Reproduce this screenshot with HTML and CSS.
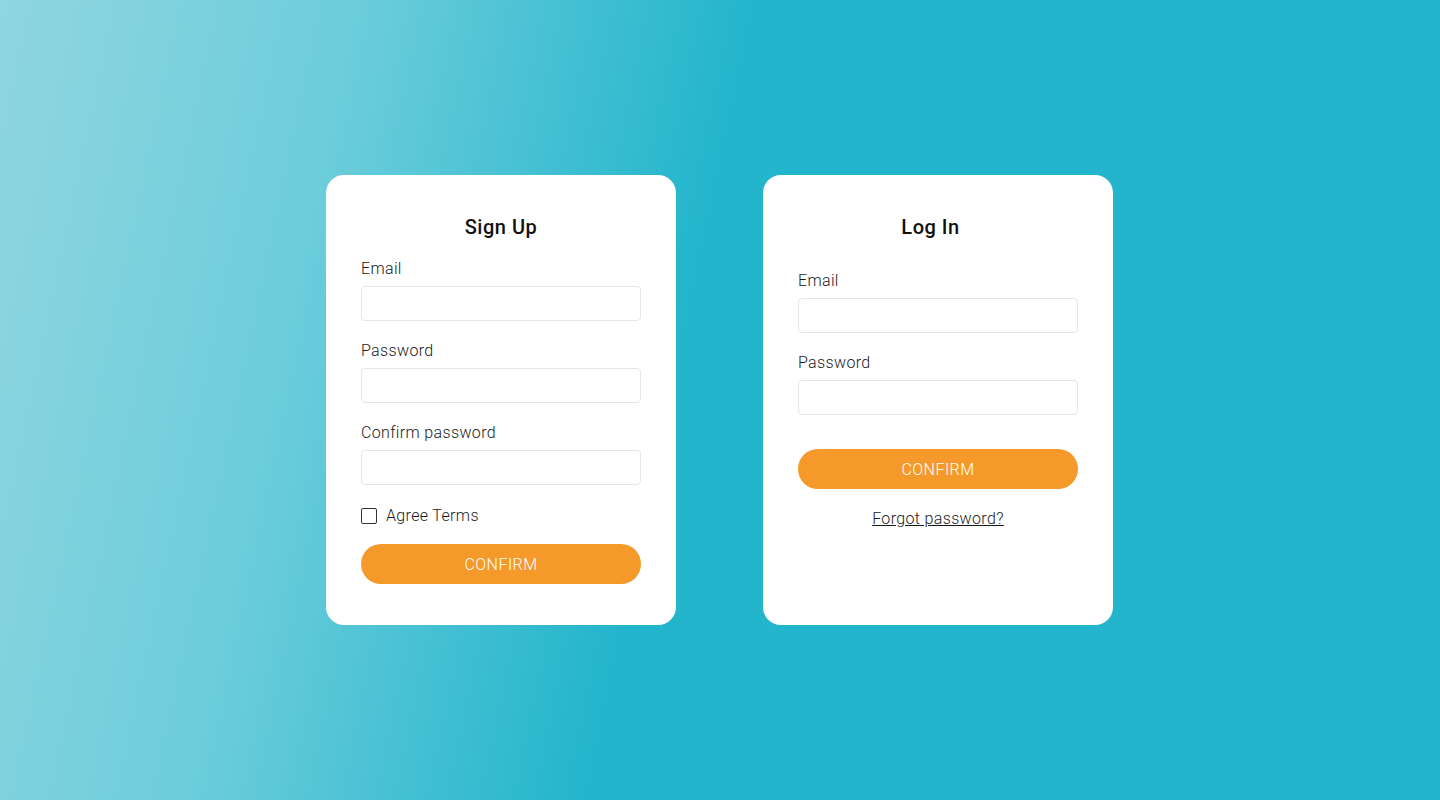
FILE: index.html
```html
<!DOCTYPE html>
<html lang="en">
<head>
<meta charset="utf-8">
<title>Sign Up / Log In</title>
<link rel="stylesheet" href="styles.css">
</head>
<body>
<main class="stage">
  <section class="card">
    <h2 class="title">Sign Up</h2>
    <div class="field">
      <label class="label">Email</label>
      <div class="input"></div>
    </div>
    <div class="field">
      <label class="label">Password</label>
      <div class="input"></div>
    </div>
    <div class="field">
      <label class="label">Confirm password</label>
      <div class="input"></div>
    </div>
    <div class="check-row">
      <span class="checkbox"></span>
      <span class="check-label">Agree Terms</span>
    </div>
    <div class="button">CONFIRM</div>
  </section>
  <section class="card">
    <h2 class="title title-login">Log In</h2>
    <div class="field">
      <label class="label">Email</label>
      <div class="input"></div>
    </div>
    <div class="field">
      <label class="label">Password</label>
      <div class="input"></div>
    </div>
    <div class="button button-login">CONFIRM</div>
    <a class="forgot">Forgot password?</a>
  </section>
</main>
</body>
</html>
```
FILE: styles.css
```css
* { box-sizing: border-box; }
html, body { margin: 0; padding: 0; }
body {
  width: 1440px;
  height: 800px;
  overflow: hidden;
  font-family: Roboto, "Liberation Sans", sans-serif;
  letter-spacing: 0.35px;
  background: linear-gradient(102deg, #8fd6e0 0%, #6dcddb 22%, #22b5cc 47%, #22b5cc 100%);
}
.stage {
  height: 800px;
  padding-right: 1px;
  display: flex;
  justify-content: center;
  align-items: center;
  gap: 87px;
}
.card {
  width: 350px;
  height: 450px;
  background: #fff;
  border-radius: 18px;
  padding: 35px;
  display: flex;
  flex-direction: column;
}
.title {
  margin: 0 0 15px;
  font-size: 20px;
  font-weight: 500;
  line-height: 34px;
  text-align: center;
  color: #111;
  letter-spacing: 0.5px;
}
.title-login {
  margin-bottom: 27px;
  padding-right: 15px;
}
.field {
  display: flex;
  flex-direction: column;
  margin-bottom: 20px;
}
.label {
  font-size: 16px;
  font-weight: 300;
  line-height: 19px;
  color: #1a1a1a;
  margin-bottom: 8px;
}
.input {
  height: 35px;
  border: 1px solid #e6e6e6;
  border-radius: 4px;
  background: #fff;
}
.check-row {
  display: flex;
  align-items: center;
  height: 19px;
  margin-top: 1px;
  margin-bottom: 19px;
}
.checkbox {
  width: 16px;
  height: 16px;
  border: 1px solid #333;
  border-radius: 2px;
  margin-right: 9px;
}
.check-label {
  font-size: 16px;
  font-weight: 300;
  color: #1a1a1a;
  line-height: 19px;
}
.button {
  height: 40px;
  border-radius: 20px;
  background: #f5992b;
  color: #fff;
  font-size: 16px;
  font-weight: 300;
  letter-spacing: 0.45px;
  display: flex;
  align-items: center;
  justify-content: center;
}
.button-login { margin-top: 14px; }
.forgot {
  margin-top: 20px;
  text-align: center;
  font-size: 16px;
  font-weight: 300;
  line-height: 19px;
  color: #1a1a1a;
  text-decoration: underline;
}
```
